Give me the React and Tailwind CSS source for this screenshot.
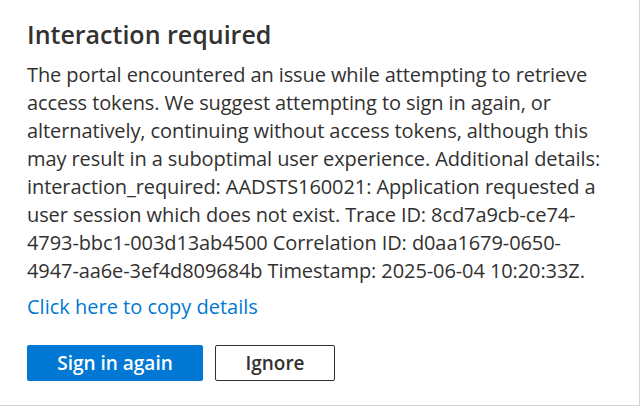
import React from "react";

const lines = [
  "The portal encountered an issue while attempting to retrieve",
  "access tokens. We suggest attempting to sign in again, or",
  "alternatively, continuing without access tokens, although this",
  "may result in a suboptimal user experience. Additional details:",
  "interaction_required: AADSTS160021: Application requested a",
  "user session which does not exist. Trace ID: 8cd7a9cb-ce74-",
  "4793-bbc1-003d13ab4500 Correlation ID: d0aa1679-0650-",
  "4947-aa6e-3ef4d809684b Timestamp: 2025-06-04 10:20:33Z.",
];

export default function App() {
  return (
    <div className="w-[640px] h-[406px] bg-white border-r border-b border-[#d4d4d4] font-['Open_Sans',sans-serif] text-[#323130] overflow-hidden">
      <div className="pl-[27px] pr-[20px] pt-[18px]">
        <h1 className="text-[25px] leading-[32px] font-semibold">Interaction required</h1>
        <div className="mt-[11px] text-[20px] leading-[28px] tracking-[-0.09px]">
          {lines.map((l) => (
            <div key={l} className="whitespace-nowrap">{l}</div>
          ))}
        </div>
        <div className="mt-[8px] text-[20px] leading-[28px]">
          <a className="text-[#0078d4] cursor-pointer">Click here to copy details</a>
        </div>
        <div className="mt-[24px] flex gap-[12px]">
          <button className="w-[176px] h-[36px] rounded-[2px] bg-[#0078d4] text-white text-[19px] font-semibold leading-none">
            Sign in again
          </button>
          <button className="w-[120px] h-[36px] rounded-[2px] border border-[#323130] bg-white text-[#323130] text-[19px] font-semibold leading-none">
            Ignore
          </button>
        </div>
      </div>
    </div>
  );
}
